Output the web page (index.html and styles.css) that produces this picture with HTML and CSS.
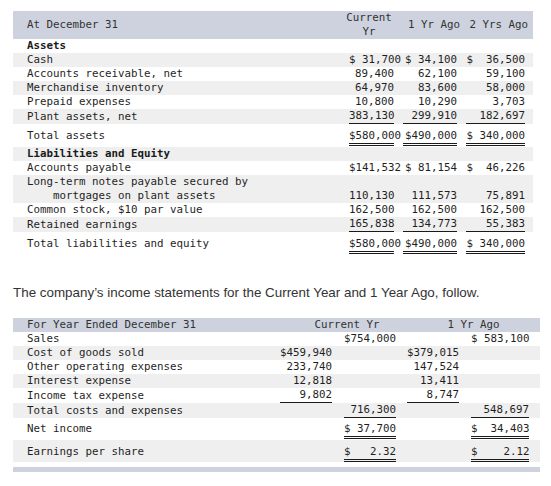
FILE: index.html
```html
<!DOCTYPE html>
<html lang="en">
<head>
  <meta charset="UTF-8">
  <title>Financial statements</title>
  <link rel="stylesheet" href="styles.css">
</head>
<body>
  <table class="sheet balance">
    <colgroup>
      <col class="c-label">
      <col class="c-cur">
      <col class="c-one">
      <col class="c-two">
    </colgroup>
    <thead>
      <tr>
        <th class="label">At December 31</th>
        <th class="hd-cur">Current<br>Yr</th>
        <th class="hd-right"><span>1 Yr Ago</span></th>
        <th class="hd-right last"><span>2 Yrs Ago</span></th>
      </tr>
    </thead>
    <tbody>
      <tr>
        <td class="label"><b>Assets</b></td>
        <td></td><td></td><td class="last"></td>
      </tr>
      <tr class="alt">
        <td class="label">Cash</td>
        <td class="num"><span class="v">$ 31,700</span></td>
        <td class="num"><span class="v">$ 34,100</span></td>
        <td class="num last"><span class="v">$  36,500</span></td>
      </tr>
      <tr>
        <td class="label">Accounts receivable, net</td>
        <td class="num"><span class="v">89,400</span></td>
        <td class="num"><span class="v">62,100</span></td>
        <td class="num last"><span class="v">59,100</span></td>
      </tr>
      <tr class="alt">
        <td class="label">Merchandise inventory</td>
        <td class="num"><span class="v">64,970</span></td>
        <td class="num"><span class="v">83,600</span></td>
        <td class="num last"><span class="v">58,000</span></td>
      </tr>
      <tr>
        <td class="label">Prepaid expenses</td>
        <td class="num"><span class="v">10,800</span></td>
        <td class="num"><span class="v">10,290</span></td>
        <td class="num last"><span class="v">3,703</span></td>
      </tr>
      <tr class="alt">
        <td class="label">Plant assets, net</td>
        <td class="num"><span class="v u1">383,130</span></td>
        <td class="num"><span class="v u1">299,910</span></td>
        <td class="num last"><span class="v u1">182,697</span></td>
      </tr>
      <tr class="total">
        <td class="label">Total assets</td>
        <td class="num"><span class="v u2">$580,000</span></td>
        <td class="num"><span class="v u2">$490,000</span></td>
        <td class="num last"><span class="v u2">$ 340,000</span></td>
      </tr>
      <tr class="alt">
        <td class="label"><b>Liabilities and Equity</b></td>
        <td></td><td></td><td class="last"></td>
      </tr>
      <tr>
        <td class="label">Accounts payable</td>
        <td class="num"><span class="v">$141,532</span></td>
        <td class="num"><span class="v">$ 81,154</span></td>
        <td class="num last"><span class="v">$  46,226</span></td>
      </tr>
      <tr class="alt bottom">
        <td class="label">Long-term notes payable secured by<br><span class="indent">mortgages on plant assets</span></td>
        <td class="num"><span class="v">110,130</span></td>
        <td class="num"><span class="v">111,573</span></td>
        <td class="num last"><span class="v">75,891</span></td>
      </tr>
      <tr>
        <td class="label">Common stock, $10 par value</td>
        <td class="num"><span class="v">162,500</span></td>
        <td class="num"><span class="v">162,500</span></td>
        <td class="num last"><span class="v">162,500</span></td>
      </tr>
      <tr class="alt">
        <td class="label">Retained earnings</td>
        <td class="num"><span class="v u1">165,838</span></td>
        <td class="num"><span class="v u1">134,773</span></td>
        <td class="num last"><span class="v u1">55,383</span></td>
      </tr>
      <tr class="total">
        <td class="label">Total liabilities and equity</td>
        <td class="num"><span class="v u2">$580,000</span></td>
        <td class="num"><span class="v u2">$490,000</span></td>
        <td class="num last"><span class="v u2">$ 340,000</span></td>
      </tr>
    </tbody>
  </table>

  <p class="intro">The company’s income statements for the Current Year and 1 Year Ago, follow.</p>

  <table class="sheet income">
    <colgroup>
      <col class="i-label">
      <col class="i-a">
      <col class="i-b">
      <col class="i-c">
      <col class="i-d">
    </colgroup>
    <thead>
      <tr>
        <th class="label">For Year Ended December 31</th>
        <th colspan="2" class="hd-cur2">Current Yr</th>
        <th colspan="2" class="hd-ago2">1 Yr Ago</th>
      </tr>
    </thead>
    <tbody>
      <tr>
        <td class="label">Sales</td>
        <td></td>
        <td class="num"><span class="v">$754,000</span></td>
        <td></td>
        <td class="num last"><span class="v">$ 583,100</span></td>
      </tr>
      <tr class="alt">
        <td class="label">Cost of goods sold</td>
        <td class="num"><span class="v">$459,940</span></td>
        <td></td>
        <td class="num"><span class="v">$379,015</span></td>
        <td class="last"></td>
      </tr>
      <tr>
        <td class="label">Other operating expenses</td>
        <td class="num"><span class="v">233,740</span></td>
        <td></td>
        <td class="num"><span class="v">147,524</span></td>
        <td class="last"></td>
      </tr>
      <tr class="alt">
        <td class="label">Interest expense</td>
        <td class="num"><span class="v">12,818</span></td>
        <td></td>
        <td class="num"><span class="v">13,411</span></td>
        <td class="last"></td>
      </tr>
      <tr class="tax">
        <td class="label">Income tax expense</td>
        <td class="num"><span class="v u1">9,802</span></td>
        <td></td>
        <td class="num"><span class="v u1">8,747</span></td>
        <td class="last"></td>
      </tr>
      <tr class="alt costs">
        <td class="label">Total costs and expenses</td>
        <td></td>
        <td class="num"><span class="v u1">716,300</span></td>
        <td></td>
        <td class="num last"><span class="v u1">548,697</span></td>
      </tr>
      <tr class="net">
        <td class="label">Net income</td>
        <td></td>
        <td class="num"><span class="v u2">$ 37,700</span></td>
        <td></td>
        <td class="num last"><span class="v u2">$  34,403</span></td>
      </tr>
      <tr class="alt eps">
        <td class="label">Earnings per share</td>
        <td></td>
        <td class="num"><span class="v u2">$   2.32</span></td>
        <td></td>
        <td class="num last"><span class="v u2">$    2.12</span></td>
      </tr>
    </tbody>
    <tfoot>
      <tr class="gap"><td colspan="5"></td></tr>
      <tr class="band"><td colspan="5"></td></tr>
    </tfoot>
  </table>
</body>
</html>
```

FILE: styles.css
```css
body {
  margin: 8px;
  background: #fff;
  color: #1f1f1f;
}

.sheet {
  margin-left: 5px;
  border-collapse: collapse;
  table-layout: fixed;
  font-family: "DejaVu Sans Mono", "Liberation Mono", monospace;
  font-size: 10.8px;
  line-height: 14px;
}

.sheet th,
.sheet td {
  padding: 0;
  font-weight: normal;
  white-space: pre;
  vertical-align: middle;
}

.sheet b {
  font-weight: bold;
  color: #1a1a1a;
}

.sheet thead th {
  background: #cdd2de;
  color: #333;
}

.sheet .label {
  padding-left: 14px;
  text-align: left;
}

.sheet .indent {
  padding-left: 26px;
}

.sheet tr.alt td {
  background: #efefef;
}

.num {
  text-align: right;
}

.v {
  display: block;
  text-align: right;
}

.u1 {
  border-bottom: 1px solid #1a1a1a;
}

.u2 {
  border-bottom: 3px double #1a1a1a;
}

/* balance sheet */
.balance {
  width: 520px;
  margin-top: 3px;
}

.balance .c-label { width: 327px; }
.balance .c-cur { width: 54px; }
.balance .c-one { width: 63px; }
.balance .c-two { width: 76px; }

.balance td.num,
.balance th.hd-right {
  padding-left: 9px;
}

.balance .last {
  padding-right: 8px;
}

.balance thead th {
  height: 28px;
}

.balance .hd-cur {
  text-align: center;
  padding-left: 4px;
}

.balance .hd-right {
  text-align: right;
}

.balance .hd-right span {
  margin-right: -3px;
}

.balance tr.total td {
  padding-top: 5px;
  padding-bottom: 1px;
}

.balance tr.total td.label {
  vertical-align: top;
}

.balance tr.bottom td {
  vertical-align: bottom;
}

.intro {
  margin: 29px 0 16px 5px;
  font-family: "Liberation Sans", Arial, sans-serif;
  font-size: 13.4px;
  line-height: 18px;
  color: #333;
}

/* income statement */
.income {
  width: 527px;
}

.income .i-label { width: 267px; }
.income .i-a { width: 52px; }
.income .i-b { width: 64px; }
.income .i-c { width: 63px; }
.income .i-d { width: 81px; }

.income td.num:nth-child(3) { padding-left: 12px; }
.income td.num:nth-child(4) { padding-left: 11px; }
.income td.num:nth-child(5) { padding-left: 12px; }

.income .last {
  padding-right: 11px;
}

.income .hd-cur2 {
  text-align: center;
  padding-left: 18px;
}

.income .hd-ago2 {
  text-align: center;
  padding-left: 11px;
}

.income tr.net td {
  padding-top: 4px;
  padding-bottom: 1px;
}

.income tr.eps td {
  padding-top: 5px;
  padding-bottom: 0;
}

.income tr.net td.label,
.income tr.eps td.label {
  vertical-align: top;
}

.income tr.gap td {
  height: 5px;
  padding: 0;
}

.income tr.band td {
  height: 5px;
  padding: 0;
  background: #cdd2de;
}
```
